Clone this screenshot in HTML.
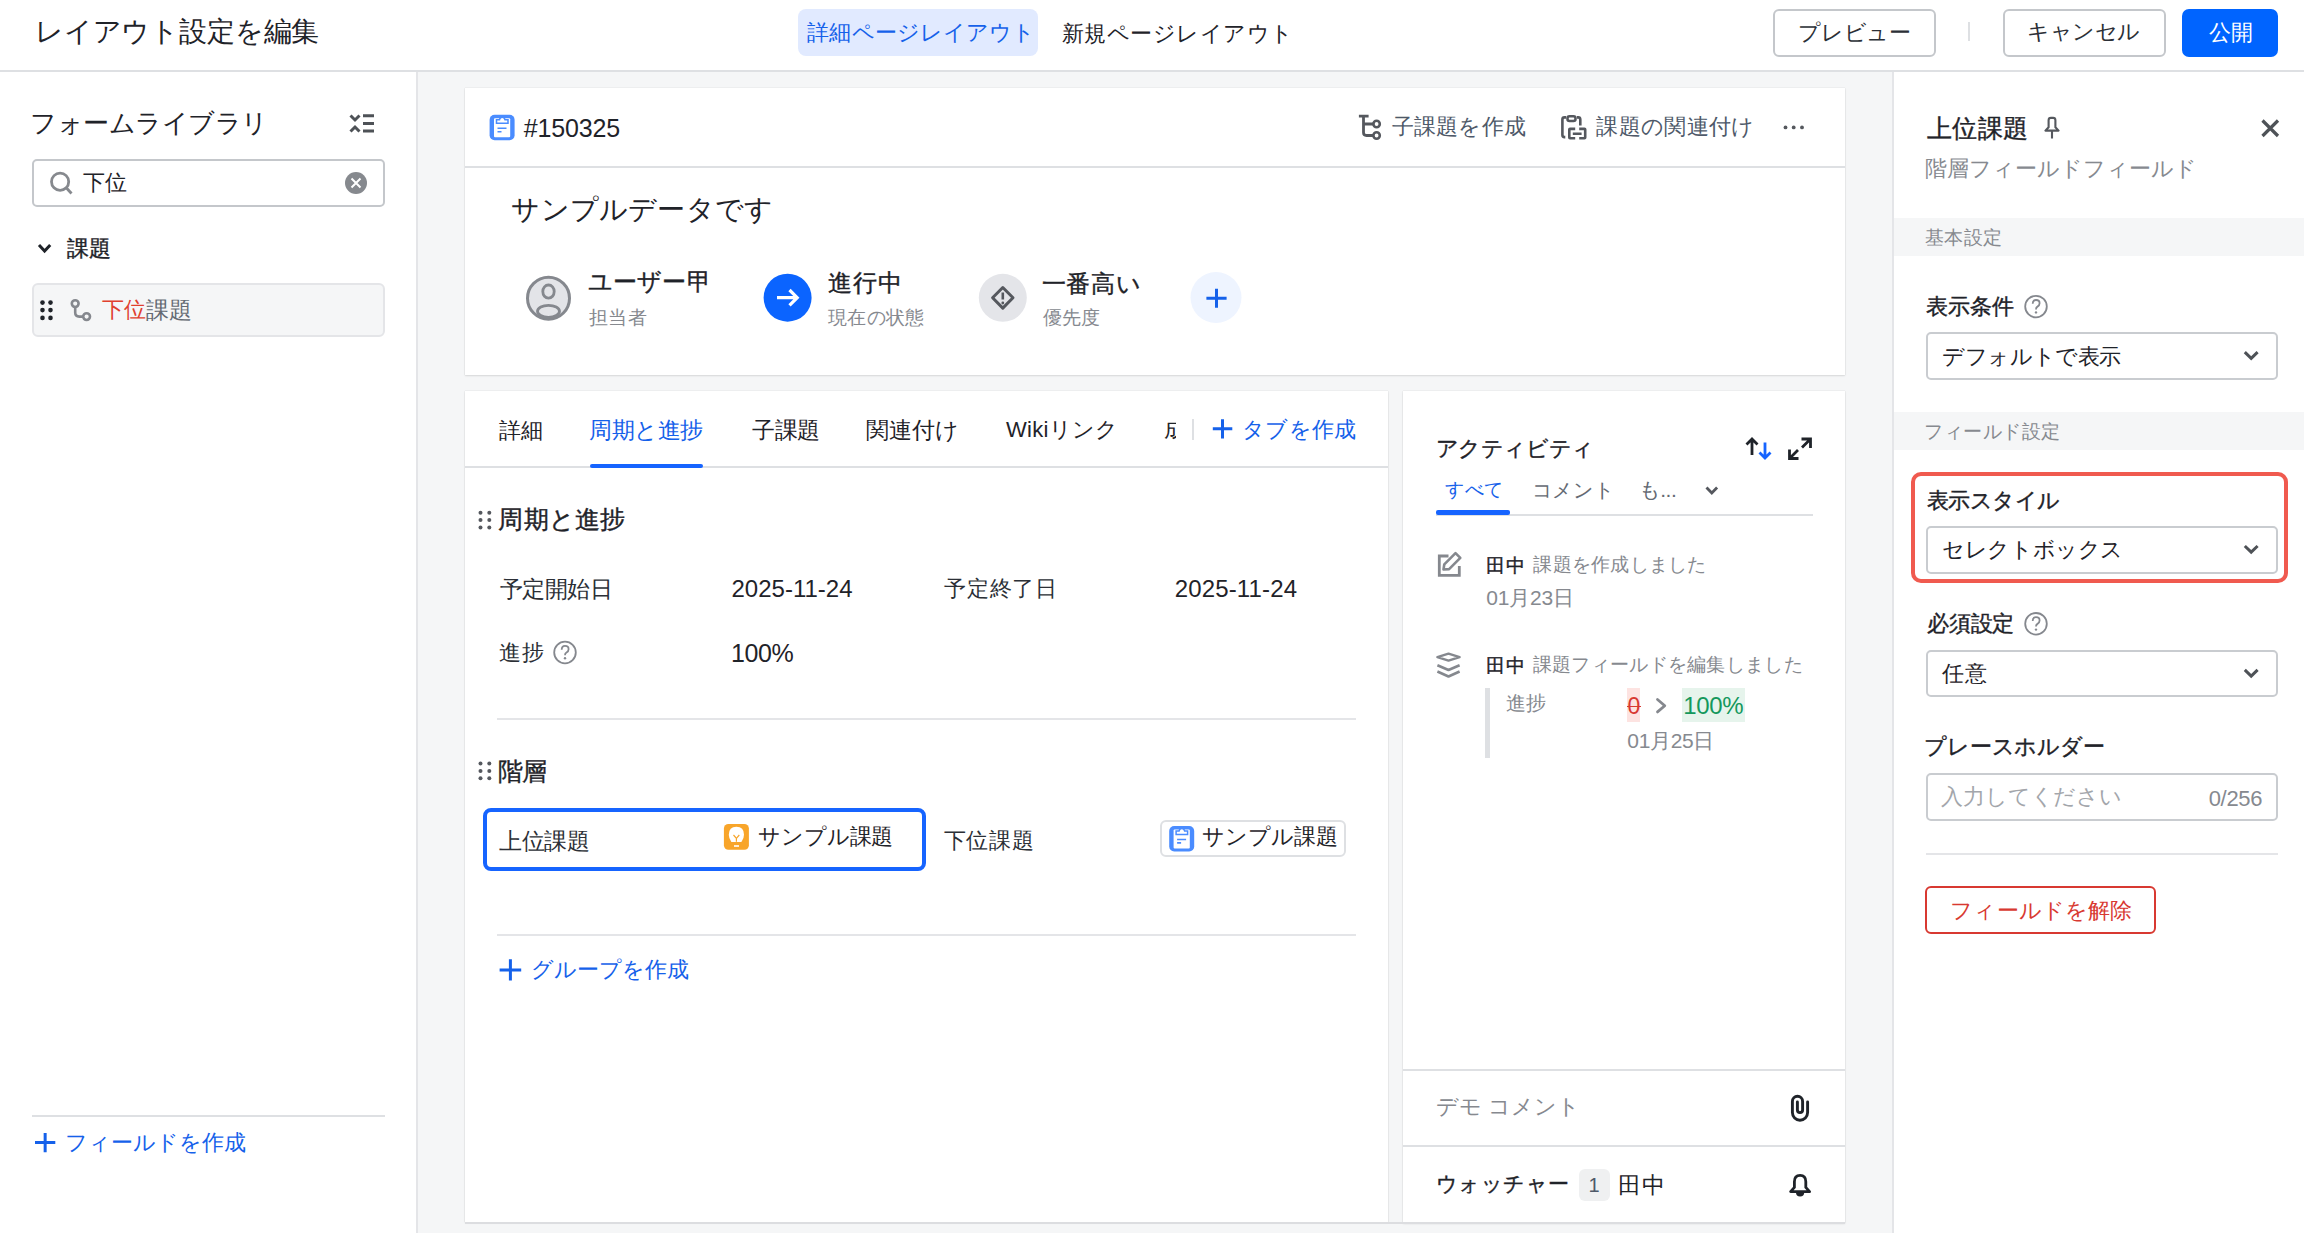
<!DOCTYPE html><html><head><meta charset="utf-8"><style>
html,body{margin:0;padding:0;width:2304px;height:1233px;overflow:hidden;background:#fff;position:relative;font-family:"Liberation Sans",sans-serif}
.t{position:absolute;white-space:nowrap;line-height:1}
</style></head><body>
<div style="position:absolute;left:0px;top:0px;width:2304px;height:70px;background:#fff;border-bottom:2px solid #dee0e3"></div>
<div style="position:absolute;left:0px;top:72px;width:416px;height:1161px;background:#fff;border-right:2px solid #e4e5e8"></div>
<div style="position:absolute;left:418px;top:72px;width:1474px;height:1161px;background:#f5f6f7"></div>
<div style="position:absolute;left:1892px;top:72px;width:412px;height:1161px;background:#fff;border-left:2px solid #e4e5e8;box-sizing:border-box"></div>
<div style="position:absolute;left:798px;top:9px;width:240px;height:47px;background:#e1eaff;border-radius:8px"></div>
<div style="position:absolute;left:1773px;top:9px;width:163px;height:48px;border:2px solid #c4c7cb;border-radius:6px;box-sizing:border-box;background:#fff"></div>
<div style="position:absolute;left:1968px;top:22px;width:2px;height:19px;background:#dee0e3"></div>
<div style="position:absolute;left:2003px;top:9px;width:163px;height:48px;border:2px solid #c4c7cb;border-radius:6px;box-sizing:border-box;background:#fff"></div>
<div style="position:absolute;left:2182px;top:9px;width:96px;height:48px;background:#0064ff;border-radius:7px"></div>
<div style="position:absolute;left:32px;top:159px;width:353px;height:48px;border:2px solid #c4c7cb;border-radius:5px;box-sizing:border-box"></div>
<div style="position:absolute;left:32px;top:283px;width:353px;height:54px;border:2px solid #e4e5e8;border-radius:6px;box-sizing:border-box;background:#f5f6f7"></div>
<div style="position:absolute;left:32px;top:1115px;width:353px;height:2px;background:#dee0e3"></div>
<div style="position:absolute;left:465px;top:88px;width:1380px;height:287px;background:#fff;box-shadow:0 0 1px rgba(0,0,0,0.18),0 1px 2px rgba(0,0,0,0.10)"></div>
<div style="position:absolute;left:465px;top:166px;width:1380px;height:2px;background:#dee0e3"></div>
<div style="position:absolute;left:465px;top:391px;width:923px;height:831px;background:#fff;box-shadow:0 0 1px rgba(0,0,0,0.18),0 1px 2px rgba(0,0,0,0.10)"></div>
<div style="position:absolute;left:1403px;top:391px;width:442px;height:832px;background:#fff;box-shadow:0 0 1px rgba(0,0,0,0.18),0 1px 2px rgba(0,0,0,0.10)"></div>
<div style="position:absolute;left:465px;top:1222px;width:1380px;height:2px;background:#dcdde0"></div>
<div style="position:absolute;left:465px;top:466px;width:923px;height:2px;background:#dee0e3"></div>
<div style="position:absolute;left:590px;top:464px;width:113px;height:4px;background:#1664ff;border-radius:2px"></div>
<div style="position:absolute;left:1192px;top:419px;width:2px;height:21px;background:#dee0e3"></div>
<div style="position:absolute;left:497px;top:718px;width:859px;height:2px;background:#e4e5e8"></div>
<div style="position:absolute;left:483px;top:808px;width:443px;height:63px;border:4px solid #1664ff;border-radius:8px;box-sizing:border-box"></div>
<div style="position:absolute;left:1160px;top:820px;width:186px;height:37px;border:2px solid #dee0e3;border-radius:6px;box-sizing:border-box"></div>
<div style="position:absolute;left:497px;top:934px;width:859px;height:2px;background:#e4e5e8"></div>
<div style="position:absolute;left:1436px;top:514px;width:377px;height:2px;background:#dee0e3"></div>
<div style="position:absolute;left:1436px;top:510px;width:74px;height:5px;background:#1664ff;border-radius:2px"></div>
<div style="position:absolute;left:1485px;top:688px;width:5px;height:70px;background:#dee0e3"></div>
<div style="position:absolute;left:1627px;top:688px;width:13px;height:34px;background:#fde3e1"></div>
<div style="position:absolute;left:1682px;top:688px;width:63px;height:34px;background:#e6f4ec"></div>
<div style="position:absolute;left:1403px;top:1069px;width:442px;height:2px;background:#dee0e3"></div>
<div style="position:absolute;left:1403px;top:1145px;width:442px;height:2px;background:#dee0e3"></div>
<div style="position:absolute;left:1579px;top:1169px;width:31px;height:32px;background:#eff0f1;border-radius:6px"></div>
<div style="position:absolute;left:1894px;top:218px;width:410px;height:38px;background:#f5f6f7"></div>
<div style="position:absolute;left:1926px;top:332px;width:352px;height:48px;border:2px solid #c9ccd0;border-radius:5px;box-sizing:border-box"></div>
<div style="position:absolute;left:1894px;top:412px;width:410px;height:38px;background:#f5f6f7"></div>
<div style="position:absolute;left:1911px;top:472px;width:377px;height:111px;border:4px solid #f05a4f;border-radius:10px;box-sizing:border-box"></div>
<div style="position:absolute;left:1926px;top:526px;width:352px;height:48px;border:2px solid #c9ccd0;border-radius:5px;box-sizing:border-box"></div>
<div style="position:absolute;left:1926px;top:650px;width:352px;height:47px;border:2px solid #c9ccd0;border-radius:5px;box-sizing:border-box"></div>
<div style="position:absolute;left:1926px;top:773px;width:352px;height:48px;border:2px solid #c9ccd0;border-radius:5px;box-sizing:border-box"></div>
<div style="position:absolute;left:1926px;top:853px;width:352px;height:2px;background:#e4e5e8"></div>
<div style="position:absolute;left:1925px;top:886px;width:231px;height:48px;border:2px solid #d83931;border-radius:6px;box-sizing:border-box"></div>

<svg style="position:absolute;left:0;top:0" width="2304" height="1233"><path d="M350.5 115.5 L355 120 L359.5 115.5 M350.5 131.5 L355 127 L359.5 131.5" fill="none" stroke="#4e5257" stroke-width="3"/><path d="M363 115.7 H374 M363 123.4 H374 M363 131 H374" stroke="#4e5257" stroke-width="3"/><circle cx="60.1" cy="181.7" r="8.6" fill="none" stroke="#86898e" stroke-width="2.8"/><path d="M66.5 188 L71.5 193.5" stroke="#86898e" stroke-width="2.8"/><circle cx="356" cy="183" r="11" fill="#86898e"/><path d="M351.5 178.5 L360.5 187.5 M360.5 178.5 L351.5 187.5" stroke="#fff" stroke-width="2"/><path d="M39 245 L44.6 251 L50.2 245" fill="none" stroke="#1f2329" stroke-width="3"/><circle cx="42.5" cy="302.6" r="2.3" fill="#1f2329"/><circle cx="42.5" cy="310.1" r="2.3" fill="#1f2329"/><circle cx="42.5" cy="317.9" r="2.3" fill="#1f2329"/><circle cx="50.5" cy="302.6" r="2.3" fill="#1f2329"/><circle cx="50.5" cy="310.1" r="2.3" fill="#1f2329"/><circle cx="50.5" cy="317.9" r="2.3" fill="#1f2329"/><circle cx="75.2" cy="303.6" r="3.4" fill="none" stroke="#85888e" stroke-width="2.6"/><circle cx="86.6" cy="316.6" r="3.4" fill="none" stroke="#85888e" stroke-width="2.6"/><path d="M75.2 307 V312.5 Q75.2 316.6 79.3 316.6 H83" fill="none" stroke="#85888e" stroke-width="2.6"/><path d="M35 1142.6 H55.3 M45.15 1133 V1152.2" stroke="#1561ea" stroke-width="3"/><rect x="489.6" y="114.8" width="25" height="25.4" rx="5" fill="#4a8cff"/><rect x="494.0" y="118.2" width="16.2" height="19" rx="1" fill="#fff"/><path d="M496.50 123.20 V119.70 H499.50 Q500.00 117.20 502.20 117.20 Q504.40 117.20 505.00 119.70 H508.00 V123.20 Z" fill="#fff" stroke="#4a8cff" stroke-width="1.5"/><path d="M497.50 128.30 H506.50 M497.50 131.70 H501.50" stroke="#4a8cff" stroke-width="1.6"/><path d="M1358.9 116.2 H1368.6 M1363.5 117 V132.5 Q1363.5 135.5 1366.5 135.5 H1373.4 M1363.5 124 H1373.4" fill="none" stroke="#55585e" stroke-width="2.8"/><circle cx="1376.6" cy="124" r="3.2" fill="none" stroke="#55585e" stroke-width="2.6"/><circle cx="1376.6" cy="135.5" r="3.2" fill="none" stroke="#55585e" stroke-width="2.6"/><path d="M1566 117.4 H1564.5 Q1562.4 117.4 1562.4 119.5 V135 Q1562.4 137.1 1564.5 137.1 H1565.3 M1577 117.4 H1578.2 Q1580.3 117.4 1580.3 119.5 V125.4" fill="none" stroke="#55585e" stroke-width="2.6"/><rect x="1567.5" y="116.2" width="8" height="4.8" rx="2" fill="none" stroke="#55585e" stroke-width="2.6"/><path d="M1575.2 128.9 H1570 Q1569.3 128.9 1569.3 129.6 V137.6 Q1569.3 138.2 1570 138.2 H1575.2 M1579.2 128.9 H1584.5 Q1585.2 128.9 1585.2 129.6 V137.6 Q1585.2 138.2 1584.5 138.2 H1579.2 M1572.8 133.8 H1581.6" fill="none" stroke="#55585e" stroke-width="2.6"/><circle cx="1785.5" cy="127.4" r="1.9" fill="#55585e"/><circle cx="1793.7" cy="127.4" r="1.9" fill="#55585e"/><circle cx="1802" cy="127.4" r="1.9" fill="#55585e"/><defs><clipPath id="av"><circle cx="548.5" cy="298.2" r="21"/></clipPath></defs><circle cx="548.5" cy="298.2" r="21" fill="#e3e4e8" stroke="#85888e" stroke-width="3"/><ellipse cx="548.5" cy="291.6" rx="5.7" ry="6.6" fill="none" stroke="#85888e" stroke-width="2.8"/><g clip-path="url(#av)"><ellipse cx="548.5" cy="311.3" rx="11" ry="6" fill="none" stroke="#85888e" stroke-width="2.8"/></g><circle cx="787.6" cy="297.7" r="24" fill="#0b64ff"/><path d="M777 297.7 H797 M789.5 290 L797.2 297.7 L789.5 305.4" fill="none" stroke="#fff" stroke-width="3.2"/><circle cx="1002.8" cy="297.8" r="24" fill="#e4e5e9"/><path d="M1002.8 287.5 L1013 297.8 L1002.8 308.1 L992.6 297.8 Z" fill="none" stroke="#55585e" stroke-width="3" stroke-linejoin="round"/><path d="M1002.8 292.5 V299.5" stroke="#55585e" stroke-width="2.6"/><circle cx="1002.8" cy="303" r="1.4" fill="#55585e"/><circle cx="1216" cy="297.5" r="25.5" fill="#eef4ff"/><path d="M1206.4 298.2 H1226.6 M1216.5 288.7 V307.8" stroke="#1561ea" stroke-width="3"/><path d="M1212.8 428.8 H1232.3 M1222.5 419.2 V438.5" stroke="#1561ea" stroke-width="3"/><circle cx="480.5" cy="512.8000000000001" r="2" fill="#55585e"/><circle cx="480.5" cy="520.1" r="2" fill="#55585e"/><circle cx="480.5" cy="527.4000000000001" r="2" fill="#55585e"/><circle cx="489.3" cy="512.8000000000001" r="2" fill="#55585e"/><circle cx="489.3" cy="520.1" r="2" fill="#55585e"/><circle cx="489.3" cy="527.4000000000001" r="2" fill="#55585e"/><circle cx="480.5" cy="763.6" r="2" fill="#55585e"/><circle cx="480.5" cy="770.9" r="2" fill="#55585e"/><circle cx="480.5" cy="778.2" r="2" fill="#55585e"/><circle cx="489.3" cy="763.6" r="2" fill="#55585e"/><circle cx="489.3" cy="770.9" r="2" fill="#55585e"/><circle cx="489.3" cy="778.2" r="2" fill="#55585e"/><circle cx="565" cy="652.5" r="10.8" fill="none" stroke="#85888e" stroke-width="1.8"/><path d="M561.7 649.7 Q561.7 645.9 565 645.9 Q568.6 645.9 568.6 649.2 Q568.6 651.5 566.2 652.8 Q565 653.5 565 655.3" fill="none" stroke="#85888e" stroke-width="1.8"/><circle cx="565" cy="658.3" r="1.2" fill="#85888e"/><circle cx="2036" cy="306.6" r="10.8" fill="none" stroke="#85888e" stroke-width="1.8"/><path d="M2032.7 303.8 Q2032.7 300.0 2036 300.0 Q2039.6 300.0 2039.6 303.3 Q2039.6 305.6 2037.2 306.90000000000003 Q2036 307.6 2036 309.40000000000003" fill="none" stroke="#85888e" stroke-width="1.8"/><circle cx="2036" cy="312.40000000000003" r="1.2" fill="#85888e"/><circle cx="2036" cy="623.8" r="10.8" fill="none" stroke="#85888e" stroke-width="1.8"/><path d="M2032.7 621.0 Q2032.7 617.1999999999999 2036 617.1999999999999 Q2039.6 617.1999999999999 2039.6 620.5 Q2039.6 622.8 2037.2 624.0999999999999 Q2036 624.8 2036 626.5999999999999" fill="none" stroke="#85888e" stroke-width="1.8"/><circle cx="2036" cy="629.5999999999999" r="1.2" fill="#85888e"/><rect x="723.9" y="823.9" width="25" height="25.8" rx="4.5" fill="#f8a52a"/><path d="M731.4 842 Q728.8 838.5 728.8 834.8 Q728.8 826.8 736.4 826.8 Q744 826.8 744 834.8 Q744 838.5 741.4 842 Z" fill="#fff"/><path d="M733.5 835 L736.4 838.3 L739.3 835 M736.4 838.3 V841.8" fill="none" stroke="#f8a52a" stroke-width="1.2"/><path d="M734 846 H739" stroke="#fff" stroke-width="1.6"/><rect x="1169.2" y="826" width="25" height="25.4" rx="5" fill="#4a8cff"/><rect x="1173.6000000000001" y="829.4" width="16.2" height="19" rx="1" fill="#fff"/><path d="M1176.10 834.40 V830.90 H1179.10 Q1179.60 828.40 1181.80 828.40 Q1184.00 828.40 1184.60 830.90 H1187.60 V834.40 Z" fill="#fff" stroke="#4a8cff" stroke-width="1.5"/><path d="M1177.10 839.50 H1186.10 M1177.10 842.90 H1181.10" stroke="#4a8cff" stroke-width="1.6"/><path d="M499.6 969.9 H521.2 M510.4 959.3 V980.5" stroke="#1561ea" stroke-width="3"/><path d="M1752 440 V455 M1746.5 444.5 L1752 439 L1757.5 444.5" fill="none" stroke="#1f2329" stroke-width="2.8"/><path d="M1765 442.6 V457.5 M1759.5 452.5 L1765 458 L1770.5 452.5" fill="none" stroke="#1664ff" stroke-width="2.8"/><path d="M1801.5 439 H1810.5 V448 M1810.5 439 L1802 447.5 M1798.5 458.5 H1789.5 V449.5 M1789.5 458.5 L1798 450" fill="none" stroke="#1f2329" stroke-width="2.8"/><path d="M1706.5 487.5 L1711.8 493 L1717.1 487.5" fill="none" stroke="#55585e" stroke-width="2.8"/><path d="M1448.5 556 H1439.3 V575.3 H1459.3 V566" fill="none" stroke="#85888e" stroke-width="2.8"/><path d="M1443.5 569.5 L1444.3 564.3 L1455.5 553.1 L1460.3 557.9 L1449.1 569.1 Z" fill="none" stroke="#85888e" stroke-width="2.6" stroke-linejoin="round"/><path d="M1448.5 653.6 L1459.6 657.1 L1448.5 660.6 L1437.4 657.1 Z" fill="none" stroke="#85888e" stroke-width="2.4" stroke-linejoin="round"/><path d="M1437.4 665.2 L1448.5 670 L1459.6 665.2 M1437.4 671.5 L1448.5 676.5 L1459.6 671.5" fill="none" stroke="#85888e" stroke-width="2.6" stroke-linejoin="round"/><path d="M1657.5 699.5 L1664.8 705.7 L1657.5 711.9" fill="none" stroke="#85888e" stroke-width="2.8" stroke-linecap="round" stroke-linejoin="round"/><path d="M1807.6 1102 V1112.6 A7.6 7.6 0 0 1 1792.4 1112.6 V1101.4 A5.1 5.1 0 0 1 1802.6 1101.4 V1110 A2.6 2.6 0 0 1 1797.4 1110 V1102" fill="none" stroke="#1f2329" stroke-width="2.9" stroke-linecap="round"/><path d="M1790.6 1191.6 L1794.4 1187.4 V1181.8 Q1794.4 1175.4 1800.1 1175.4 Q1805.8 1175.4 1805.8 1181.8 V1187.4 L1809.6 1191.6 Z" fill="none" stroke="#1f2329" stroke-width="2.8" stroke-linejoin="round"/><path d="M1796 1192.5 A4.1 4.1 0 0 0 1804.2 1192.5 Z" fill="#1f2329"/><path d="M2048.6 127.2 V120.2 Q2048.6 117.9 2050.9 117.9 H2053.1 Q2055.4 117.9 2055.4 120.2 V127.2 L2058.6 130.6 H2045.4 Z M2052 130.6 V138.6" fill="none" stroke="#55585e" stroke-width="2.1" stroke-linejoin="round"/><path d="M2262.5 120.5 L2278 136 M2278 120.5 L2262.5 136" stroke="#4e5257" stroke-width="3.2"/><path d="M2244.8 352.09999999999997 L2251.2 358.29999999999995 L2257.6 352.09999999999997" fill="none" stroke="#4e5257" stroke-width="3"/><path d="M2244.8 546.0 L2251.2 552.1999999999999 L2257.6 546.0" fill="none" stroke="#4e5257" stroke-width="3"/><path d="M2244.8 669.9000000000001 L2251.2 676.1 L2257.6 669.9000000000001" fill="none" stroke="#4e5257" stroke-width="3"/></svg>

<div class="t" id="h_title" style="left:34.83px;top:18.30px;font-size:28px;letter-spacing:-0.161px;font-weight:400;color:#1f2329;">レイアウト設定を編集</div>
<div class="t" id="h_tab1" style="left:807.40px;top:22.00px;font-size:22px;letter-spacing:0.067px;font-weight:400;color:#1561ea;">詳細ページレイアウト</div>
<div class="t" id="h_tab2" style="left:1062.00px;top:22.50px;font-size:22px;letter-spacing:0.444px;font-weight:400;color:#1f2329;">新規ページレイアウト</div>
<div class="t" id="h_prev" style="left:1798.25px;top:22.40px;font-size:22px;letter-spacing:-0.375px;font-weight:400;color:#2b2f36;">プレビュー</div>
<div class="t" id="h_cancel" style="left:2027.00px;top:21.40px;font-size:22px;letter-spacing:-0.500px;font-weight:400;color:#2b2f36;">キャンセル</div>
<div class="t" id="h_pub" style="left:2208.75px;top:22.00px;font-size:22px;letter-spacing:0.500px;font-weight:400;color:#ffffff;">公開</div>
<div class="t" id="l_title" style="left:30.00px;top:109.85px;font-size:26px;letter-spacing:-0.500px;font-weight:400;color:#1f2329;">フォームライブラリ</div>
<div class="t" id="l_search" style="left:82.75px;top:172.10px;font-size:22px;letter-spacing:0.500px;font-weight:400;color:#1f2329;">下位</div>
<div class="t" id="l_grp" style="left:67.00px;top:237.90px;font-size:22px;letter-spacing:0.000px;font-weight:400;-webkit-text-stroke:0.4px #1f2329;color:#1f2329;">課題</div>
<div class="t" id="l_item_r" style="left:102.00px;top:299.40px;font-size:22px;letter-spacing:0.000px;font-weight:400;color:#e0402f;">下位</div>
<div class="t" id="l_item_g" style="left:146.00px;top:298.90px;font-size:23px;letter-spacing:0.000px;font-weight:400;color:#646a73;">課題</div>
<div class="t" id="l_create" style="left:65.40px;top:1131.75px;font-size:22px;letter-spacing:-0.057px;font-weight:400;color:#1561ea;">フィールドを作成</div>
<div class="t" id="c_id" style="left:523.65px;top:115.65px;font-size:25px;letter-spacing:-0.150px;font-weight:400;color:#1f2329;">#150325</div>
<div class="t" id="c_child" style="left:1391.65px;top:116.30px;font-size:22px;letter-spacing:0.220px;font-weight:400;color:#4e5969;">子課題を作成</div>
<div class="t" id="c_link" style="left:1596.30px;top:116.30px;font-size:22px;letter-spacing:0.367px;font-weight:400;color:#4e5969;">課題の関連付け</div>
<div class="t" id="c_name" style="left:511.40px;top:196.00px;font-size:28px;letter-spacing:0.200px;font-weight:400;color:#1f2329;">サンプルデータです</div>
<div class="t" id="c_user" style="left:587.50px;top:270.00px;font-size:24px;letter-spacing:0.250px;font-weight:400;-webkit-text-stroke:0.4px #1f2329;color:#1f2329;">ユーザー甲</div>
<div class="t" id="c_user2" style="left:588.60px;top:308.25px;font-size:19px;letter-spacing:0.700px;font-weight:400;color:#86898f;">担当者</div>
<div class="t" id="c_st" style="left:828.35px;top:271.00px;font-size:24px;letter-spacing:0.950px;font-weight:400;-webkit-text-stroke:0.4px #1f2329;color:#1f2329;">進行中</div>
<div class="t" id="c_st2" style="left:828.10px;top:308.25px;font-size:19px;letter-spacing:0.350px;font-weight:400;color:#86898f;">現在の状態</div>
<div class="t" id="c_pr" style="left:1041.60px;top:271.50px;font-size:24px;letter-spacing:0.800px;font-weight:400;-webkit-text-stroke:0.4px #1f2329;color:#1f2329;">一番高い</div>
<div class="t" id="c_pr2" style="left:1042.70px;top:307.75px;font-size:19px;letter-spacing:0.400px;font-weight:400;color:#86898f;">優先度</div>
<div class="t" id="t_1" style="left:498.60px;top:419.50px;font-size:22px;letter-spacing:0.400px;font-weight:400;color:#1f2329;">詳細</div>
<div class="t" id="t_2" style="left:589.35px;top:419.00px;font-size:23px;letter-spacing:-0.525px;font-weight:400;color:#1561ea;">周期と進捗</div>
<div class="t" id="t_3" style="left:751.75px;top:419.00px;font-size:23px;letter-spacing:-0.250px;font-weight:400;color:#1f2329;">子課題</div>
<div class="t" id="t_4" style="left:865.65px;top:418.50px;font-size:23px;letter-spacing:0.033px;font-weight:400;color:#1f2329;">関連付け</div>
<div class="t" id="t_5" style="left:1006.10px;top:418.50px;font-size:22px;letter-spacing:0.233px;font-weight:400;color:#1f2329;">Wikiリンク</div>
<div class="t" id="t_add" style="left:1241.70px;top:418.50px;font-size:22px;letter-spacing:0.450px;font-weight:400;color:#1561ea;">タブを作成</div>
<div class="t" id="s1_title" style="left:498.30px;top:507.35px;font-size:25px;letter-spacing:0.300px;font-weight:400;-webkit-text-stroke:0.4px #1f2329;color:#1f2329;">周期と進捗</div>
<div class="t" id="f_start" style="left:499.50px;top:577.70px;font-size:23px;letter-spacing:-0.500px;font-weight:400;color:#2b2f36;">予定開始日</div>
<div class="t" id="f_startv" style="left:731.50px;top:576.70px;font-size:24px;letter-spacing:0.000px;font-weight:400;color:#1f2329;">2025-11-24</div>
<div class="t" id="f_end" style="left:944.45px;top:578.20px;font-size:22px;letter-spacing:0.575px;font-weight:400;color:#2b2f36;">予定終了日</div>
<div class="t" id="f_endv" style="left:1174.80px;top:576.70px;font-size:24px;letter-spacing:0.133px;font-weight:400;color:#1f2329;">2025-11-24</div>
<div class="t" id="f_prog" style="left:498.60px;top:641.70px;font-size:22px;letter-spacing:1.400px;font-weight:400;color:#2b2f36;">進捗</div>
<div class="t" id="f_progv" style="left:731.05px;top:640.65px;font-size:25px;letter-spacing:-0.433px;font-weight:400;color:#1f2329;">100%</div>
<div class="t" id="s2_title" style="left:497.90px;top:758.60px;font-size:25px;letter-spacing:-0.400px;font-weight:400;-webkit-text-stroke:0.4px #1f2329;color:#1f2329;">階層</div>
<div class="t" id="f_parent" style="left:499.45px;top:829.55px;font-size:23px;letter-spacing:-0.567px;font-weight:400;color:#2b2f36;">上位課題</div>
<div class="t" id="f_parentv" style="left:757.70px;top:826.40px;font-size:22px;letter-spacing:-0.040px;font-weight:400;color:#1f2329;">サンプル課題</div>
<div class="t" id="f_child" style="left:943.65px;top:830.05px;font-size:22px;letter-spacing:0.700px;font-weight:400;color:#2b2f36;">下位課題</div>
<div class="t" id="f_childv" style="left:1202.00px;top:826.40px;font-size:22px;letter-spacing:0.000px;font-weight:400;color:#1f2329;">サンプル課題</div>
<div class="t" id="f_group" style="left:531.05px;top:958.55px;font-size:22px;letter-spacing:-0.050px;font-weight:400;color:#1561ea;">グループを作成</div>
<div class="t" id="a_title" style="left:1435.75px;top:438.15px;font-size:22px;letter-spacing:-0.417px;font-weight:400;-webkit-text-stroke:0.4px #1f2329;color:#1f2329;">アクティビティ</div>
<div class="t" id="a_t1" style="left:1445.40px;top:480.00px;font-size:19px;letter-spacing:0.300px;font-weight:400;color:#1561ea;">すべて</div>
<div class="t" id="a_t2" style="left:1531.65px;top:479.50px;font-size:20px;letter-spacing:0.700px;font-weight:400;color:#646a73;">コメント</div>
<div class="t" id="a_t3" style="left:1638.75px;top:478.50px;font-size:21px;letter-spacing:-0.500px;font-weight:400;color:#646a73;">も...</div>
<div class="t" id="a_u1" style="left:1485.65px;top:556.35px;font-size:19px;letter-spacing:1.100px;font-weight:400;-webkit-text-stroke:0.4px #1f2329;color:#1f2329;">田中</div>
<div class="t" id="a_m1" style="left:1533.30px;top:555.35px;font-size:19px;letter-spacing:0.275px;font-weight:400;color:#86898f;">課題を作成しました</div>
<div class="t" id="a_d1" style="left:1486.15px;top:587.25px;font-size:21px;letter-spacing:-0.180px;font-weight:400;color:#86898f;">01月23日</div>
<div class="t" id="a_u2" style="left:1485.65px;top:656.15px;font-size:19px;letter-spacing:1.100px;font-weight:400;-webkit-text-stroke:0.4px #1f2329;color:#1f2329;">田中</div>
<div class="t" id="a_m2" style="left:1532.65px;top:654.65px;font-size:19px;letter-spacing:0.315px;font-weight:400;color:#86898f;">課題フィールドを編集しました</div>
<div class="t" id="a_p" style="left:1505.60px;top:693.40px;font-size:20px;letter-spacing:0.400px;font-weight:400;color:#86898f;">進捗</div>
<div class="t" id="a_old" style="left:1627.50px;top:695.00px;font-size:23px;letter-spacing:0.000px;font-weight:400;color:#d83931;">0</div>
<div class="t" id="a_new" style="left:1683.35px;top:693.70px;font-size:24px;letter-spacing:-0.367px;font-weight:400;color:#14985c;">100%</div>
<div class="t" id="a_d2" style="left:1627.25px;top:730.35px;font-size:21px;letter-spacing:-0.300px;font-weight:400;color:#86898f;">01月25日</div>
<div class="t" id="a_cmt" style="left:1436.45px;top:1096.10px;font-size:22px;letter-spacing:-0.117px;font-weight:400;color:#86898f;">デモ コメント</div>
<div class="t" id="a_w" style="left:1435.90px;top:1172.75px;font-size:21px;letter-spacing:0.520px;font-weight:400;-webkit-text-stroke:0.4px #1f2329;color:#1f2329;">ウォッチャー</div>
<div class="t" id="a_w1" style="left:1588.50px;top:1175.00px;font-size:20px;letter-spacing:0.000px;font-weight:400;color:#4e5969;">1</div>
<div class="t" id="a_wn" style="left:1618.35px;top:1174.15px;font-size:23px;letter-spacing:0.900px;font-weight:400;color:#1f2329;">田中</div>
<div class="t" id="r_title" style="left:1926.60px;top:115.90px;font-size:25px;letter-spacing:0.467px;font-weight:400;-webkit-text-stroke:0.4px #1f2329;color:#1f2329;">上位課題</div>
<div class="t" id="r_sub" style="left:1924.70px;top:158.35px;font-size:22px;letter-spacing:0.073px;font-weight:400;color:#86898f;">階層フィールドフィールド</div>
<div class="t" id="r_sec1" style="left:1925.00px;top:228.00px;font-size:19px;letter-spacing:0.333px;font-weight:400;color:#86898f;">基本設定</div>
<div class="t" id="r_cond" style="left:1925.90px;top:296.00px;font-size:22px;letter-spacing:0.200px;font-weight:400;-webkit-text-stroke:0.4px #1f2329;color:#1f2329;">表示条件</div>
<div class="t" id="r_condv" style="left:1941.90px;top:345.55px;font-size:22px;letter-spacing:-0.343px;font-weight:400;color:#1f2329;">デフォルトで表示</div>
<div class="t" id="r_sec2" style="left:1924.00px;top:422.35px;font-size:19px;letter-spacing:0.500px;font-weight:400;color:#86898f;">フィールド設定</div>
<div class="t" id="r_style" style="left:1926.90px;top:489.90px;font-size:22px;letter-spacing:-0.480px;font-weight:400;-webkit-text-stroke:0.4px #1f2329;color:#1f2329;">表示スタイル</div>
<div class="t" id="r_stylev" style="left:1942.10px;top:538.70px;font-size:22px;letter-spacing:-0.371px;font-weight:400;color:#1f2329;">セレクトボックス</div>
<div class="t" id="r_req" style="left:1926.70px;top:613.25px;font-size:22px;letter-spacing:-0.067px;font-weight:400;-webkit-text-stroke:0.4px #1f2329;color:#1f2329;">必須設定</div>
<div class="t" id="r_reqv" style="left:1942.05px;top:663.30px;font-size:22px;letter-spacing:0.700px;font-weight:400;color:#1f2329;">任意</div>
<div class="t" id="r_ph" style="left:1924.25px;top:735.95px;font-size:22px;letter-spacing:-0.214px;font-weight:400;-webkit-text-stroke:0.4px #1f2329;color:#1f2329;">プレースホルダー</div>
<div class="t" id="r_phv" style="left:1941.20px;top:786.00px;font-size:22px;letter-spacing:-0.171px;font-weight:400;color:#a3a6ab;">入力してください</div>
<div class="t" id="r_cnt" style="left:2208.70px;top:787.75px;font-size:22px;letter-spacing:-0.300px;font-weight:400;color:#86898f;">0/256</div>
<div class="t" id="r_del" style="left:1950.45px;top:899.95px;font-size:22px;letter-spacing:0.043px;font-weight:400;color:#d83931;">フィールドを解除</div>
<div style="position:absolute;left:1627px;top:705.5px;width:13.6px;height:1.8px;background:#d83931"></div>
<div style="position:absolute;left:1150px;top:400px;width:26px;height:50px;overflow:hidden"><div class="t" style="left:14px;top:18.5px;font-size:22.6px;color:#1f2329">成</div></div>
</body></html>
